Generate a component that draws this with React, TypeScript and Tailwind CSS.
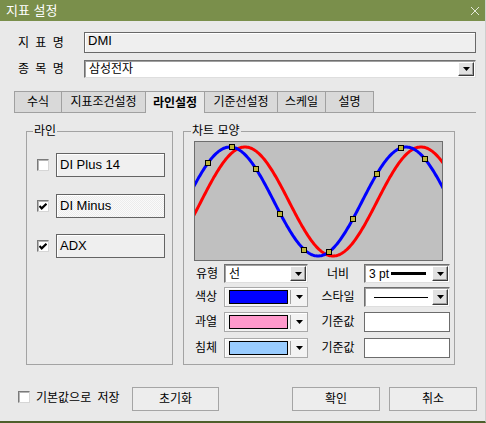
import React from "react";

const W = 247;
const blueY = (x: number) => 59.5 - 54.5 * Math.cos((2 * Math.PI * (x - 35)) / 176);
const redY = (x: number) => 59.5 - 54.5 * Math.cos((2 * Math.PI * (x - 50)) / 176);

function curve(fn: (x: number) => number) {
  const pts: string[] = [];
  for (let x = -2; x <= W + 2; x += 1) pts.push(`${x},${fn(x).toFixed(2)}`);
  return pts.join(" ");
}

const markers = Array.from({ length: 10 }, (_, k) => 13 + 24.1 * k);

function Arrow() {
  return (
    <svg width="7" height="4" viewBox="0 0 7 4" aria-hidden>
      <path d="M0 0h7L3.5 4z" fill="#000" />
    </svg>
  );
}

function DropButton() {
  return (
    <span className="flex h-full w-[16px] shrink-0 items-center justify-center border border-t-white border-l-white border-r-[#3c3c3c] border-b-[#3c3c3c] bg-[#e1e1e1] shadow-[inset_-1px_-1px_0_#a0a0a0]">
      <Arrow />
    </span>
  );
}

function Combo({ className, children }: { className: string; children?: React.ReactNode }) {
  return (
    <div
      className={`flex items-stretch border border-t-[#6f6f6f] border-l-[#6f6f6f] border-r-[#dedede] border-b-[#dedede] bg-white p-[1px] shadow-[inset_1px_1px_0_#a0a0a0] ${className}`}
    >
      <div className="flex min-w-0 flex-1 items-center pl-[3px]">{children}</div>
      <DropButton />
    </div>
  );
}

function Check({ checked }: { checked?: boolean }) {
  return (
    <span className="flex h-[12px] w-[12px] shrink-0 items-center justify-center border border-t-[#7a7a7a] border-l-[#7a7a7a] border-r-[#d6d6d6] border-b-[#d6d6d6] bg-white shadow-[inset_1px_1px_0_#b4b4b4]">
      {checked && (
        <svg width="8" height="7" viewBox="0 0 8 7" aria-hidden>
          <path d="M0.5 3l2.2 2.4L7.5 0.8" fill="none" stroke="#000" strokeWidth="2.2" />
        </svg>
      )}
    </span>
  );
}

function ColorPick({ color }: { color: string }) {
  return (
    <div className="flex h-full w-[84px] items-center border border-[#a9a9a9] bg-[#f3f3f3] pl-[4px] shadow-[inset_1px_1px_0_#fff]">
      <span className="h-[14px] w-[59px] border border-black" style={{ background: color }} />
      <span className="ml-[2px] h-[14px] w-px bg-[#a0a0a0]" />
      <span className="flex flex-1 items-center justify-center">
        <Arrow />
      </span>
    </div>
  );
}

const tabs = ["수식", "지표조건설정", "라인설정", "기준선설정", "스케일", "설명"];
const tabW = ["w-[48px]", "w-[84px]", "w-[59px]", "w-[73px]", "w-[48px]", "w-[48px]"];

const lines = [
  { name: "DI Plus 14", on: false, bg: "bg-[#f0f0f0]" },
  { name: "DI Minus", on: true, bg: "bg-[#f5f5f5] bg-[length:2px_2px] bg-[conic-gradient(#fafafa_25%,#ececec_0_50%,#fafafa_0_75%,#ececec_0)]" },
  { name: "ADX", on: true, bg: "bg-[#efefef]" },
];

export default function App() {
  return (
    <div className="flex h-[423px] w-[486px] flex-col overflow-hidden border-r border-b-2 border-r-[#cfcfcf] border-b-[#4f5f2b] bg-[#e9e9e9] font-['Liberation_Sans','Noto_Sans_CJK_KR',sans-serif] text-[12px] leading-[14px] text-black">
      {/* title bar */}
      <div className="flex h-[21px] shrink-0 items-center justify-between bg-[#7a8f4b] pl-[6px] pr-[5px]">
        <span className="text-[13px] leading-none text-white">지표 설정</span>
        <svg width="10" height="10" viewBox="0 0 10 10" aria-hidden>
          <path d="M1 1l8 8M9 1l-8 8" stroke="#e4e9d8" strokeWidth="1" />
        </svg>
      </div>

      {/* 지표명 */}
      <div className="mt-[11px] flex h-[21px] items-center pl-[18px]">
        <span className="w-[66px] [word-spacing:3px]">지 표 명</span>
        <div className="h-[21px] w-[392px] border border-[#686868] bg-[#efefef] pl-[3px] pt-[1px] text-[13px] shadow-[inset_1px_1px_0_#fff]">
          DMI
        </div>
      </div>

      {/* 종목명 */}
      <div className="mt-[7px] flex h-[18px] items-center pl-[18px]">
        <span className="w-[66px] [word-spacing:3px]">종 목 명</span>
        <Combo className="h-[18px] w-[392px]">삼성전자</Combo>
      </div>

      {/* tabs */}
      <div className="ml-[14px] mt-[13px] flex h-[22px] w-[462px]">
        {tabs.map((t, i) => {
          const active = i === 2;
          return (
            <div
              key={t}
              className={`flex items-center justify-center border-t border-r border-[#a0a0a0] ${tabW[i]} ${
                i === 0 ? "border-l" : ""
              } ${active ? "bg-[#e9e9e9] font-bold" : "border-b bg-[#d9d9d9]"}`}
            >
              {t}
            </div>
          );
        })}
        <div className="flex-1 border-b border-[#a0a0a0]" />
      </div>

      {/* groups */}
      <div className="ml-[26px] mt-[11px] flex gap-[10px]">
        <fieldset className="h-[241px] w-[147px] border border-[#a3a3a3]">
          <legend className="ml-[6px] px-[1px] leading-[14px]">라인</legend>
          <div className="flex flex-col pl-[10px] pt-[15px]">
            {lines.map((l, i) => (
              <div key={l.name} className={`flex h-[24px] items-center gap-[7px] ${i === 1 ? "mt-[17px]" : i === 2 ? "mt-[16px]" : ""}`}>
                <Check checked={l.on} />
                <div className={`flex h-[24px] w-[109px] items-center border border-[#646464] pl-[3px] text-[13px] shadow-[inset_1px_1px_0_#fff] ${l.bg}`}>
                  {l.name}
                </div>
              </div>
            ))}
          </div>
        </fieldset>

        <fieldset className="h-[241px] w-[272px] border border-[#a3a3a3]">
          <legend className="ml-[7px] px-[1px] leading-[14px]">차트 모양</legend>
          <div className="flex flex-col pl-[10px] pt-[3px]">
            <div className="h-[120px] w-[249px] border border-[#6e6e6e] bg-[#c0c0c0]">
              <svg width={W} height="118" viewBox={`0 0 ${W} 118`} className="block" aria-hidden>
                <polyline points={curve(redY)} fill="none" stroke="#ff0000" strokeWidth="3" />
                <polyline points={curve(blueY)} fill="none" stroke="#0000ff" strokeWidth="3" />
                {markers.map((x) => (
                  <rect
                    key={x}
                    x={Math.round(x) - 2.5}
                    y={Math.round(blueY(x)) - 2.5}
                    width="5"
                    height="5"
                    fill="#bdb43a"
                    stroke="#000"
                    strokeWidth="1"
                  />
                ))}
              </svg>
            </div>

            <div className="mt-[3px] flex h-[19px] items-center">
              <span className="w-[30px] pl-[2px]">유형</span>
              <Combo className="h-[19px] w-[84px]">선</Combo>
              <span className="w-[56px] pl-[4px] text-center">너비</span>
              <Combo className="h-[19px] w-[86px]">
                <span>3 pt</span>
                <span className="ml-[2px] h-[3px] w-[35px] bg-black" />
              </Combo>
            </div>

            <div className="mt-[4px] flex h-[20px] items-center">
              <span className="w-[30px] pl-[1px]">색상</span>
              <ColorPick color="#0000ff" />
              <span className="w-[56px] pl-[4px] text-center">스타일</span>
              <Combo className="h-[20px] w-[86px]">
                <span className="ml-[5px] h-px w-[54px] bg-black" />
              </Combo>
            </div>

            <div className="mt-[5px] flex h-[20px] items-center">
              <span className="w-[30px] pl-[1px]">과열</span>
              <ColorPick color="#ff99cc" />
              <span className="w-[56px] pl-[4px] text-center">기준값</span>
              <div className="h-[20px] w-[86px] border border-[#6c6c6c] bg-white" />
            </div>

            <div className="mt-[6px] flex h-[20px] items-center">
              <span className="w-[30px] pl-[1px]">침체</span>
              <ColorPick color="#99ccff" />
              <span className="w-[56px] pl-[4px] text-center">기준값</span>
              <div className="h-[20px] w-[86px] border border-[#6c6c6c] bg-white" />
            </div>
          </div>
        </fieldset>
      </div>

      {/* bottom */}
      <div className="ml-[18px] mt-[22px] flex h-[24px] items-start">
        <span className="mt-[4px]">
          <Check />
        </span>
        <span className="ml-[6px] mt-[4px] w-[96px] [word-spacing:3px]">기본값으로 저장</span>
        <button type="button" className="h-[24px] w-[87px] border border-[#a5a5a5] bg-[#ededed]">
          초기화
        </button>
        <button type="button" className="ml-[73px] h-[24px] w-[88px] border border-[#a5a5a5] bg-[#ededed]">
          확인
        </button>
        <button type="button" className="ml-[9px] h-[24px] w-[88px] border border-[#a5a5a5] bg-[#ededed]">
          취소
        </button>
      </div>
    </div>
  );
}
